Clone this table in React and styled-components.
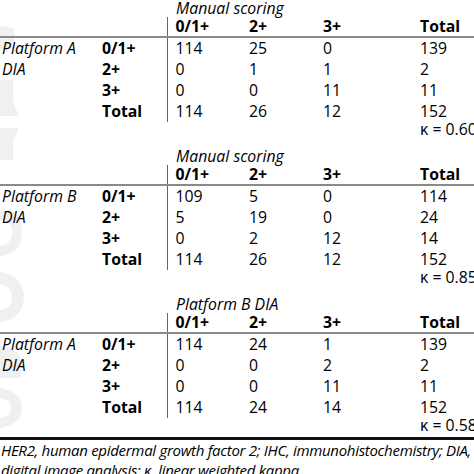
import React from "react";
import styled, { createGlobalStyle } from "styled-components";

const GlobalStyle = createGlobalStyle`
  html, body { margin: 0; padding: 0; background: #fff; }
  body { font-family: "Open Sans", "Noto Sans", sans-serif; color: #000; }
`;

const Page = styled.div`
  position: relative;
  isolation: isolate;
  width: 474px;
  height: 474px;
  overflow: hidden;
`;

const Watermark = styled.svg`
  position: absolute;
  left: 0;
  top: 0;
  z-index: 0;
  pointer-events: none;
`;

const Content = styled.div`
  position: relative;
  z-index: 1;
  display: flex;
  flex-direction: column;
`;

const Block = styled.section`
  display: flex;
  flex-direction: column;
  margin-bottom: ${(p) => p.$gap}px;
`;

const Row = styled.div`
  display: grid;
  grid-template-columns: 102px 65px 82px 74px 97px 1fr;
  height: ${(p) => p.$h}px;
  line-height: ${(p) => p.$h}px;
  font-size: 15.8px;
  border-bottom: ${(p) => (p.$rule ? "2px solid #8a8a8a" : "none")};
`;

const Cell = styled.div`
  white-space: nowrap;
  font-weight: ${(p) => (p.$bold ? 700 : 500)};
  font-style: ${(p) => (p.$italic ? "italic" : "normal")};
  padding-left: ${(p) => p.$pad || 0}px;
  grid-column: ${(p) => p.$span || "auto"};
`;

const DataFirst = styled(Cell)`
  box-sizing: border-box;
  border-left: ${(p) => (p.$line ? "1.5px solid #666" : "1.5px solid transparent")};
  padding-left: 7.5px;
`;

const Title = styled.div`
  grid-column: 3 / -1;
  padding-left: 9px;
  font-style: italic;
  font-weight: 500;
  white-space: nowrap;
`;

const ThickRule = styled.div`
  height: 3px;
  background: #111;
`;

const Footnote = styled.p`
  margin: 0;
  padding-left: 1px;
  font-size: 15px;
  font-weight: 500;
  font-style: italic;
  letter-spacing: -0.3px;
  line-height: 20px;
  white-space: nowrap;
`;

const tables = [
  {
    title: "Manual scoring",
    label: ["Platform A", "DIA"],
    rows: [
      ["0/1+", "114", "25", "0", "139"],
      ["2+", "0", "1", "1", "2"],
      ["3+", "0", "0", "11", "11"],
      ["Total", "114", "26", "12", "152"],
    ],
    kappa: "κ = 0.60",
  },
  {
    title: "Manual scoring",
    label: ["Platform B", "DIA"],
    rows: [
      ["0/1+", "109", "5", "0", "114"],
      ["2+", "5", "19", "0", "24"],
      ["3+", "0", "2", "12", "14"],
      ["Total", "114", "26", "12", "152"],
    ],
    kappa: "κ = 0.85",
  },
  {
    title: "Platform B DIA",
    label: ["Platform A", "DIA"],
    rows: [
      ["0/1+", "114", "24", "1", "139"],
      ["2+", "0", "0", "2", "2"],
      ["3+", "0", "0", "11", "11"],
      ["Total", "114", "24", "14", "152"],
    ],
    kappa: "κ = 0.58",
  },
];

const heads = ["0/1+", "2+", "3+", "Total"];

function Table({ t, gap }) {
  return (
    <Block $gap={gap}>
      <Row $h={17}>
        <Title>{t.title}</Title>
      </Row>
      <Row $h={19} $rule>
        <Cell />
        <Cell />
        <DataFirst $line $bold>{heads[0]}</DataFirst>
        <Cell $bold>{heads[1]}</Cell>
        <Cell $bold>{heads[2]}</Cell>
        <Cell $bold>{heads[3]}</Cell>
      </Row>
      {t.rows.map((r, i) => (
        <Row key={i} $h={21}>
          <Cell $italic $pad={2}>{t.label[i] || ""}</Cell>
          <Cell $bold>{r[0]}</Cell>
          <DataFirst $line>{r[1]}</DataFirst>
          <Cell>{r[2]}</Cell>
          <Cell>{r[3]}</Cell>
          <Cell>{r[4]}</Cell>
        </Row>
      ))}
      <Row $h={14}>
        <Cell $span="6 / 7">{t.kappa}</Cell>
      </Row>
    </Block>
  );
}

export default function App() {
  return (
    <>
      <GlobalStyle />
      <Page>
        <Watermark width="40" height="474" viewBox="0 0 40 474">
          <g fill="#f0f0f0">
            <path d="M0 26 L14 28 L15 48 L0 50 Z" />
            <path d="M0 80 L13 80 L13 100 Q14 108 18 112 L18 116 L0 116 Z" />
            <path d="M0 128 L18 128 L18 132 Q14 136 13 144 L13 160 L0 160 Z" />
            <path d="M0 210 Q22 208 22 232 Q22 254 0 256 L0 246 Q12 244 12 232 Q12 220 0 220 Z" />
            <path d="M0 272 Q24 276 24 298 Q22 320 0 322 L0 310 Q12 308 12 298 Q12 286 0 284 Z" />
            <path d="M0 346 Q20 348 21 362 L21 378 L0 378 Z" />
            <path d="M0 388 Q22 392 22 408 Q22 424 0 428 L0 418 Q11 416 11 408 Q11 400 0 398 Z" />
          </g>
        </Watermark>
        <Content>
          <Table t={tables[0]} gap={12} />
          <Table t={tables[1]} gap={12} />
          <Table t={tables[2]} gap={5} />
          <ThickRule />
          <Footnote>HER2, human epidermal growth factor 2; IHC, immunohistochemistry; DIA,</Footnote>
          <Footnote>digital image analysis; κ, linear weighted kappa</Footnote>
        </Content>
      </Page>
    </>
  );
}
